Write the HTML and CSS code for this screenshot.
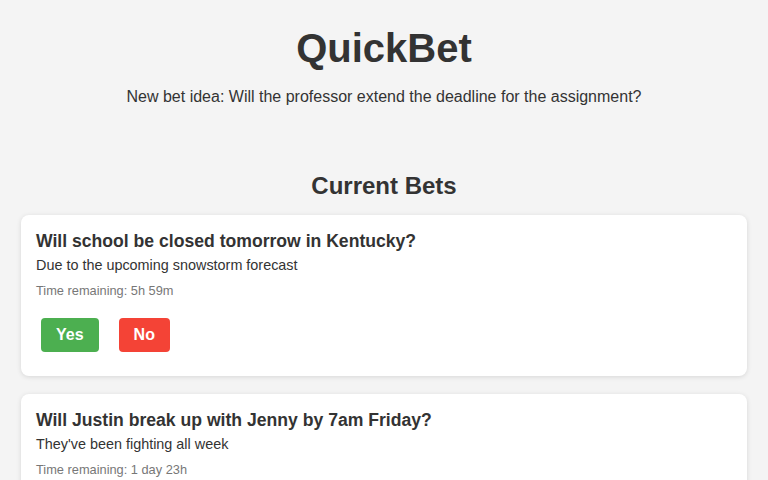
FILE: index.html
```html
<!DOCTYPE html>
<html lang="en">
<head>
<meta charset="utf-8">
<title>QuickBet</title>
<link rel="stylesheet" href="styles.css">
</head>
<body>
<div class="app">
  <header class="header">
    <h1 class="title">QuickBet</h1>
    <p class="idea">New bet idea: Will the professor extend the deadline for the assignment?</p>
  </header>
  <h2 class="section-title">Current Bets</h2>
  <div class="bets">
    <div class="card">
      <h3 class="bet-title">Will school be closed tomorrow in Kentucky?</h3>
      <p class="bet-desc">Due to the upcoming snowstorm forecast</p>
      <p class="bet-time">Time remaining: 5h 59m</p>
      <div class="actions">
        <button class="btn btn-yes">Yes</button>
        <button class="btn btn-no">No</button>
      </div>
    </div>
    <div class="card">
      <h3 class="bet-title">Will Justin break up with Jenny by 7am Friday?</h3>
      <p class="bet-desc">They've been fighting all week</p>
      <p class="bet-time">Time remaining: 1 day 23h</p>
      <div class="actions">
        <button class="btn btn-yes">Yes</button>
        <button class="btn btn-no">No</button>
      </div>
    </div>
  </div>
</div>
</body>
</html>
```
FILE: styles.css
```css
html, body {
  margin: 0;
  padding: 0;
}
body {
  background: #f4f4f4;
  color: #333;
  font-family: "Liberation Sans", Arial, sans-serif;
}
.app {
  padding: 26px 21px 20px;
}
.header {
  text-align: center;
}
.title {
  margin: 0;
  font-size: 40px;
  font-weight: bold;
  line-height: normal;
}
.idea {
  margin: 17px 0 0;
  font-size: 16px;
}
.section-title {
  margin: 66px 0 0;
  text-align: center;
  font-size: 24px;
  font-weight: bold;
}
.bets {
  display: flex;
  flex-direction: column;
  gap: 18px;
  margin-top: 15px;
}
.card {
  background: #fff;
  border-radius: 8px;
  box-shadow: 0 1px 5px rgba(0, 0, 0, 0.12);
  padding: 16px 15px 24px;
}
.bet-title {
  margin: 0;
  font-size: 17.6px;
  font-weight: bold;
}
.bet-desc {
  margin: 5px 0 0;
  font-size: 14.4px;
}
.bet-time {
  margin: 10px 0 0;
  font-size: 12.8px;
  color: #777;
}
.actions {
  display: flex;
  gap: 20px;
  margin-top: 20px;
  padding-left: 5px;
}
.btn {
  border: none;
  border-radius: 4px;
  padding: 8px 15px;
  font-family: inherit;
  font-size: 16px;
  font-weight: bold;
  line-height: normal;
  color: #fff;
  cursor: pointer;
}
.btn-yes {
  background: #4caf50;
}
.btn-no {
  background: #f44336;
}
```
